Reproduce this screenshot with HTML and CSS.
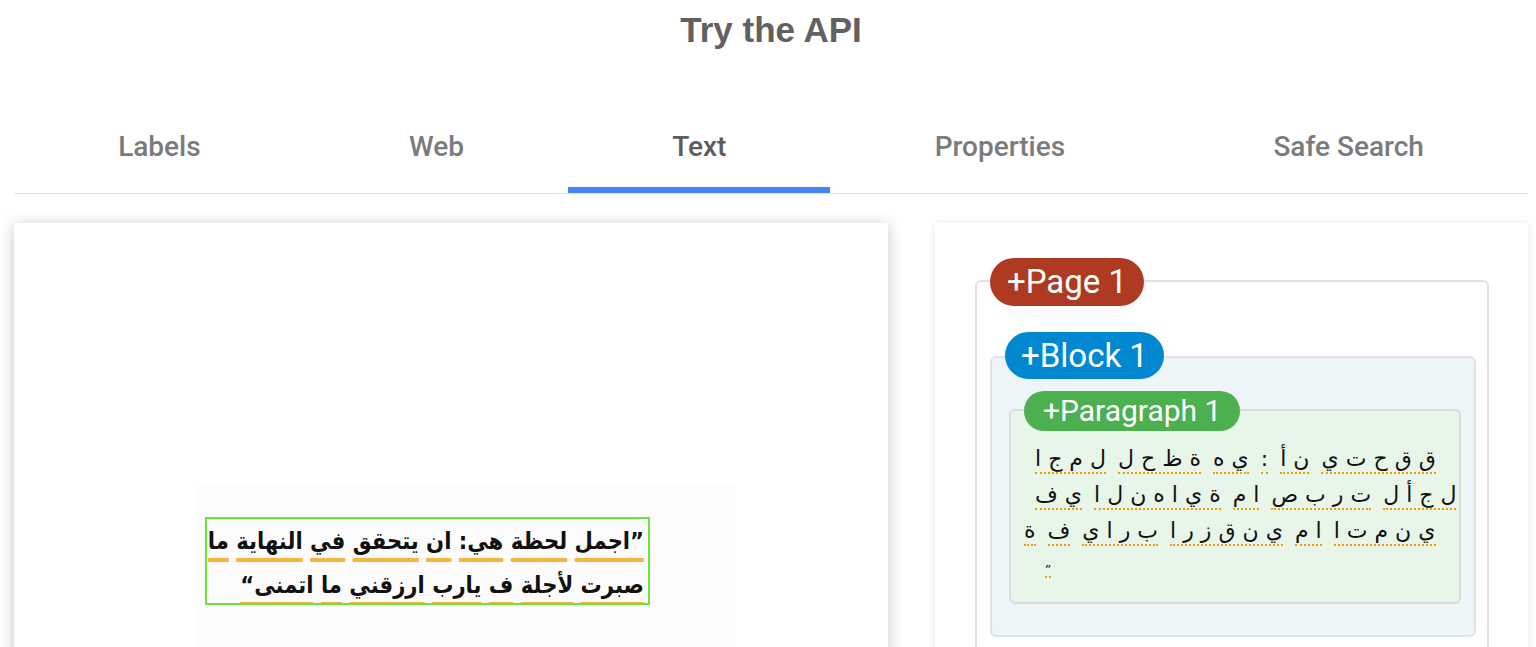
FILE: index.html
```html
<!DOCTYPE html>
<html lang="en">
<head>
<meta charset="utf-8">
<title>Try the API</title>
<link rel="stylesheet" href="styles.css">
</head>
<body>
<div class="page">
  <h1 class="title">Try the API</h1>
  <nav class="tabs">
    <div class="tab">Labels</div>
    <div class="tab">Web</div>
    <div class="tab tab--active">Text</div>
    <div class="tab">Properties</div>
    <div class="tab">Safe Search</div>
  </nav>
  <div class="panels">
    <section class="card card--image">
      <div class="ocr-image">
        <div class="ocr-box" dir="rtl">
          <div class="ocr-line"><span class="w">”اجمل</span> <span class="w">لحظة</span> <span class="w">هي:</span> <span class="w">ان</span> <span class="w">يتحقق</span> <span class="w">في</span> <span class="w">النهاية</span> <span class="w">ما</span></div>
          <div class="ocr-line"><span class="w">صبرت</span> <span class="w">لأجلة</span> <span class="w">ف</span> <span class="w">يارب</span> <span class="w">ارزقني</span> <span class="w">ما</span> <span class="w">اتمنى“</span></div>
        </div>
      </div>
    </section>
    <section class="card card--result">
      <div class="box box--page">
        <div class="badge badge--page">+Page 1</div>
        <div class="box box--block">
          <div class="badge badge--block">+Block 1</div>
          <div class="box box--para">
            <div class="badge badge--para">+Paragraph 1</div>
            <div class="para-text">
              <div class="pline"><span class="wd"><span>ا</span><span>ج</span><span>م</span><span>ل</span></span><span class="wd"><span>ل</span><span>ح</span><span>ظ</span><span>ة</span></span><span class="wd"><span>ه</span><span>ي</span></span><span class="wd"><span>:</span></span><span class="wd"><span>أ</span><span>ن</span></span><span class="wd"><span>ي</span><span>ت</span><span>ح</span><span>ق</span><span>ق</span></span></div>
              <div class="pline"><span class="wd"><span>ف</span><span>ي</span></span><span class="wd"><span>ا</span><span>ل</span><span>ن</span><span>ه</span><span>ا</span><span>ي</span><span>ة</span></span><span class="wd"><span>م</span><span>ا</span></span><span class="wd"><span>ص</span><span>ب</span><span>ر</span><span>ت</span></span><span class="wd"><span>ل</span><span>أ</span><span>ج</span><span>ل</span></span></div>
              <div class="pline pline--out"><span class="wd"><span>ة</span></span><span class="wd"><span>ف</span></span><span class="wd"><span>ي</span><span>ا</span><span>ر</span><span>ب</span></span><span class="wd"><span>ا</span><span>ر</span><span>ز</span><span>ق</span><span>ن</span><span>ي</span></span><span class="wd"><span>م</span><span>ا</span></span><span class="wd"><span>ا</span><span>ت</span><span>م</span><span>ن</span><span>ي</span></span></div>
              <div class="pline"><span class="wd wd--quote"><span>”</span></span></div>
            </div>
          </div>
        </div>
      </div>
    </section>
  </div>
</div>
</body>
</html>
```

FILE: styles.css
```css
html, body {
  margin: 0;
  padding: 0;
  background: #ffffff;
}

.page {
  padding: 0 8px 0 14px;
  font-family: Roboto, "Liberation Sans", sans-serif;
}

.title {
  margin: 10px 0 0;
  font-family: "Liberation Sans", Arial, sans-serif;
  font-weight: 700;
  font-size: 35px;
  line-height: 40px;
  color: #616161;
  text-align: center;
}

.tabs {
  display: flex;
  border-bottom: 1px solid #e0e0e0;
}

.tab {
  flex: 1 1 auto;
  text-align: center;
  font-size: 28px;
  font-weight: 500;
  line-height: 32px;
  color: #7b7b7b;
  padding: 81px 0 24px;
  border-bottom: 6px solid transparent;
}

.tab--active {
  color: #5c5c5c;
  border-bottom-color: #4285f4;
}

.panels {
  display: grid;
  grid-template-columns: minmax(0, 874fr) minmax(0, 593fr);
  column-gap: 47px;
  margin-top: 29px;
}

.card {
  background: #ffffff;
  min-height: 460px;
}

.card--image {
  box-shadow: 0 2px 14px rgba(0, 0, 0, 0.22);
}

.card--result {
  box-shadow: 0 1px 8px rgba(0, 0, 0, 0.09);
  padding: 57px 39px 0 40px;
}

/* left: OCR image */
.ocr-image {
  margin: 263px 0 0 181px;
  width: 540px;
  height: 200px;
  background: #fcfcfc;
  padding: 31px 0 0 10px;
  box-sizing: border-box;
}

.ocr-box {
  width: 445px;
  height: 88px;
  box-sizing: border-box;
  border: 2px solid #6ce43a;
  overflow: hidden;
  white-space: nowrap;
  font-family: "DejaVu Sans Condensed", "DejaVu Sans", sans-serif;
  font-weight: 700;
  font-size: 23.5px;
  line-height: 44px;
  color: #111111;
  text-align: right;
  padding-right: 4px;
}

.ocr-line {
  height: 44px;
}

.w {
  text-decoration: underline;
  text-decoration-color: #f9b43f;
  text-decoration-thickness: 4px;
  text-underline-offset: 9px;
  text-decoration-skip-ink: none;
}

/* right: structure tree */
.box {
  border: 2px solid #e0e0e0;
  border-radius: 6px;
}

.box--page {
  background: #ffffff;
  padding: 0 11px 60px 13px;
}

.box--block {
  background: #edf5f8;
  border-color: #dde3e6;
  margin-top: 50px;
  padding: 0 13px 31px 17px;
}

.box--para {
  background: #e8f5e9;
  border-color: #d9dcd9;
  margin-top: 30px;
  padding: 0 0 17px 0;
  overflow: hidden;
}

.badge {
  width: fit-content;
  color: #ffffff;
  border-radius: 24px;
}

.badge--page {
  background: #ae3a22;
  font-size: 33px;
  line-height: 48px;
  padding: 0 17px;
  margin: -24px 0 0 0;
}

.badge--block {
  background: #0288d1;
  font-size: 33px;
  line-height: 47px;
  padding: 0 16px;
  margin: -26px 0 0 -4px;
}

.box--para > .badge--para {
  margin: -20px 0 0 13px;
}

.badge--para {
  background: #4caf50;
  font-size: 30px;
  line-height: 40px;
  padding: 0 19px;
  border-radius: 20px;
}

.box--para {
  overflow: visible;
}

.para-text {
  padding: 10px 0 0 24px;
  font-family: "DejaVu Sans", sans-serif;
  font-size: 22px;
  color: #111111;
  white-space: nowrap;
}

.pline {
  height: 36px;
  line-height: 36px;
}

.pline--out {
  margin-left: -11px;
}

.wd {
  display: inline-block;
  line-height: 26px;
  border-bottom: 2px dotted #f29b00;
  margin-right: 12px;
}

.wd > span {
  display: inline-block;
  margin-right: 7px;
}

.wd > span:last-child {
  margin-right: 0;
}

.wd--quote {
  font-size: 12px;
  line-height: 12px;
  margin-left: 10px;
}
```
